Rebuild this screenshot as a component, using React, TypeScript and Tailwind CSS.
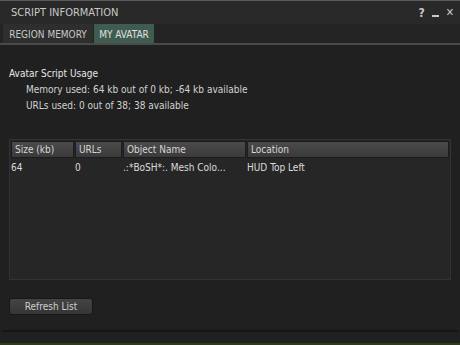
export default function App() {
  const font = { fontFamily: '"DejaVu Sans Condensed", "DejaVu Sans", sans-serif' };
  return (
    <div className="w-[460px] h-[345px] bg-[#2d3a1c] overflow-hidden" style={font}>
      <div className="relative flex h-[343px] flex-col border-t border-[#5a5a5a] bg-[#202020] text-[10px] text-[#d2d2d2]">
        {/* Title bar */}
        <div className="flex h-[23px] items-center justify-between bg-[#292929] pl-[11px] pr-[6px] pt-[1px]">
          <span className="text-[11px] text-[#c8c8c8]">SCRIPT INFORMATION</span>
          <div className="flex items-center gap-[7px] text-[12px] font-bold text-[#c8c8c8]">
            <span>?</span>
            <span className="mt-[5px] h-[2px] w-[7px] bg-[#c8c8c8]" />
            <span className="text-[11px]">✕</span>
          </div>
        </div>

        {/* Tabs */}
        <div className="flex h-[21px] items-end gap-[1px] border-b-2 border-[#4a4a4a] bg-[#242424] pl-[3px]">
          <div className="flex h-[19px] w-[90px] items-center justify-center bg-[#2e2e2e] pt-[1px] text-[#c8c8c8]">
            REGION MEMORY
          </div>
          <div className="flex h-[19px] w-[60px] items-center justify-center bg-[#3e5c4f] pt-[1px] text-[#e0e0e0]">
            MY AVATAR
          </div>
        </div>

        {/* Content */}
        <div className="flex flex-1 flex-col px-[9px] pt-[21px]">
          <div className="leading-[16px] text-[#e6e6e6]">Avatar Script Usage</div>
          <div className="pl-[17px] leading-[16px]">
            <div>Memory used: 64 kb out of 0 kb; -64 kb available</div>
            <div>URLs used: 0 out of 38; 38 available</div>
          </div>

          <div className="mt-[25px] h-[141px] border border-[#333333] bg-[#262626] p-[1px]">
            <div className="flex h-[17px] gap-[1px] text-[#d6d6d6]">
              <div className="flex w-[63px] items-center border border-[#1c1c1c] bg-gradient-to-b from-[#4b4b4b] to-[#3a3a3a] pl-[3px]">Size (kb)</div>
              <div className="flex w-[47px] items-center border border-[#1c1c1c] bg-gradient-to-b from-[#4b4b4b] to-[#3a3a3a] pl-[3px]">URLs</div>
              <div className="flex w-[123px] items-center border border-[#1c1c1c] bg-gradient-to-b from-[#4b4b4b] to-[#3a3a3a] pl-[3px]">Object Name</div>
              <div className="flex flex-1 items-center border border-[#1c1c1c] bg-gradient-to-b from-[#4b4b4b] to-[#3a3a3a] pl-[3px]">Location</div>
            </div>
            <div className="mt-[1px] flex h-[16px] items-center text-[#dcdcdc]">
              <div className="w-[64px]">64</div>
              <div className="w-[48px]">0</div>
              <div className="w-[124px] overflow-hidden whitespace-nowrap">.:*BoSH*:. Mesh Colo...</div>
              <div className="flex-1">HUD Top Left</div>
            </div>
          </div>

          <div className="mt-[18px]">
            <button className="h-[17px] w-[84px] rounded-[3px] border border-[#181818] bg-gradient-to-b from-[#444444] to-[#353535] text-[#cfcfcf]">
              Refresh List
            </button>
          </div>
        </div>

        <div className="mx-[2px] mb-[11px] h-[2px] bg-[#161616]" />
      </div>
    </div>
  );
}
